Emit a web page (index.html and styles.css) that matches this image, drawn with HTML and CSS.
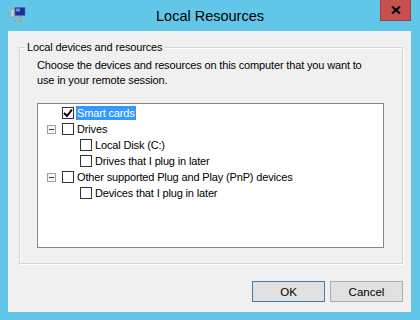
FILE: index.html
```html
<!DOCTYPE html>
<html>
<head>
<meta charset="utf-8">
<link rel="stylesheet" href="styles.css">
</head>
<body>
<div class="window">
  <div class="titlebar">
    <div class="app-icon">
      <svg width="16" height="16" viewBox="0 0 16 16">
        <rect x="0" y="2" width="3" height="8" fill="#d8d4c8" stroke="#8a8a80" stroke-width="0.6"/>
        <rect x="4" y="0.5" width="10" height="8" fill="#1a2f9c" stroke="#5a6a9a" stroke-width="0.6"/>
        <rect x="5" y="1.5" width="4" height="3" fill="#6f8ee0"/>
        <rect x="8" y="9" width="2" height="2" fill="#9a9a9a"/>
        <rect x="5" y="11" width="8" height="1" fill="#b0b0b0"/>
        <rect x="3" y="13.5" width="2" height="1" fill="#9aa020"/>
        <rect x="6" y="13.5" width="2" height="1" fill="#c8c020"/>
        <rect x="9" y="13.5" width="2" height="1" fill="#9aa020"/>
        <rect x="12" y="13.5" width="2" height="1" fill="#c8c020"/>
      </svg>
    </div>
    <div class="title">Local Resources</div>
    <div class="close"><svg width="10" height="8" viewBox="0 0 10 8"><path d="M1 0.5 L9 7.5 M9 0.5 L1 7.5" stroke="#000" stroke-width="2"/></svg></div>
  </div>
  <div class="client">
    <fieldset class="group">
      <legend class="group-label">Local devices and resources</legend>
      <p class="desc">Choose the devices and resources on this computer that you want to use in your remote session.</p>
      <div class="listbox">
        <div class="row">
          <span class="exp hidden"></span>
          <span class="cb checked"><svg width="10" height="10" viewBox="0 0 10 10"><path d="M1 5 L4 8 L9 1.5" fill="none" stroke="#000" stroke-width="2"/></svg></span>
          <span class="lbl selected">Smart cards</span>
        </div>
        <div class="row">
          <span class="exp"></span>
          <span class="cb"></span>
          <span class="lbl">Drives</span>
        </div>
        <div class="row lvl1">
          <span class="cb"></span>
          <span class="lbl">Local Disk (C:)</span>
        </div>
        <div class="row lvl1">
          <span class="cb"></span>
          <span class="lbl">Drives that I plug in later</span>
        </div>
        <div class="row">
          <span class="exp"></span>
          <span class="cb"></span>
          <span class="lbl">Other supported Plug and Play (PnP) devices</span>
        </div>
        <div class="row lvl1">
          <span class="cb"></span>
          <span class="lbl">Devices that I plug in later</span>
        </div>
      </div>
    </fieldset>
    <div class="buttons">
      <button class="btn default">OK</button>
      <button class="btn">Cancel</button>
    </div>
  </div>
</div>
</body>
</html>
```
FILE: styles.css
```css
* { box-sizing: border-box; }
html, body { margin: 0; padding: 0; }
body {
  width: 420px;
  height: 320px;
  background: #62c6e8;
  font-family: "Liberation Sans", Arial, sans-serif;
  font-size: 11px;
  letter-spacing: -0.15px;
  color: #000;
  overflow: hidden;
}
.window {
  display: flex;
  flex-direction: column;
  height: 320px;
}
.titlebar {
  height: 31px;
  display: grid;
  grid-template-columns: 1fr auto 1fr;
  align-items: start;
}
.app-icon {
  margin: 7px 0 0 11px;
  width: 16px;
  height: 16px;
}
.app-icon svg { display: block; }
.title {
  font-size: 14.5px;
  letter-spacing: 0;
  line-height: 18px;
  padding-top: 7px;
  color: #000;
}
.close {
  justify-self: end;
  margin-right: 9px;
  width: 31px;
  height: 21px;
  background: #c75050;
  border: 1px solid #a23b3b;
  border-top: 0;
  display: flex;
  align-items: center;
  justify-content: center;
}
.close svg { display: block; }
.client {
  flex: 1;
  margin: 0 9px 8px 8px;
  background: #f0f0f0;
  display: flex;
  flex-direction: column;
  padding: 9px 8px 10px 11px;
}
.group {
  margin: 0;
  border: 1px solid #d5d5d5;
  box-shadow: 1px 1px 0 #fff, inset 1px 1px 0 #fff;
  padding: 4px 18px 15px 17px;
  min-width: 0;
}
.group-label {
  padding: 0 2px;
  margin-left: -12px;
  line-height: 14px;
}
.desc {
  margin: 0;
  max-width: 335px;
  line-height: 15px;
}
.listbox {
  margin-top: 15px;
  height: 145px;
  background: #fff;
  border: 1px solid #828790;
  padding: 1px 0 0 9px;
}
.row {
  height: 16px;
  display: flex;
  align-items: center;
  white-space: nowrap;
}
.row.lvl1 { padding-left: 33px; }
.exp {
  width: 9px;
  height: 9px;
  border: 1px solid #a0a0a0;
  background: #f4f4f4;
  margin-right: 6px;
  position: relative;
}
.exp::after {
  content: "";
  position: absolute;
  left: 1px;
  top: 3px;
  width: 5px;
  height: 1px;
  background: #404040;
}
.exp.hidden { visibility: hidden; }
.cb {
  width: 12px;
  height: 12px;
  border: 1px solid #333;
  background: #fff;
  display: flex;
  align-items: center;
  justify-content: center;
}
.cb svg { display: block; }
.lbl {
  margin-left: 2px;
  padding: 0 1px;
  line-height: 14px;
}
.lbl.selected {
  background: #3399ff;
  color: #fff;
}
.buttons {
  margin-top: 17px;
  display: flex;
  justify-content: flex-end;
  gap: 5px;
}
.btn {
  width: 73px;
  height: 21px;
  font-family: "Liberation Sans", Arial, sans-serif;
  font-size: 11.5px;
  color: #000;
  background: #e1e1e1;
  border: 1px solid #adadad;
  padding: 0;
  margin: 0;
}
.btn.default { border-color: #3c7fb1; }
```
